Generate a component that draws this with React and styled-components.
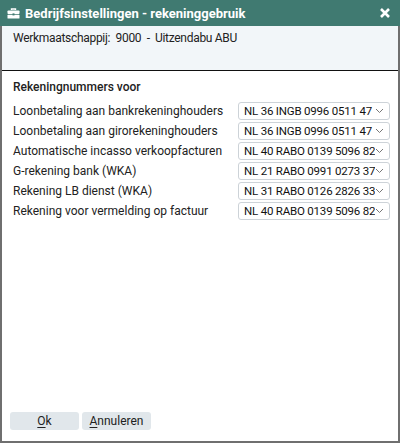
import React from "react";
import styled, { createGlobalStyle } from "styled-components";

const Global = createGlobalStyle`
  html, body { margin: 0; padding: 0; background: #fff; }
  body { font-family: Roboto, "Noto Sans", Arial, sans-serif; }
`;

const Window = styled.div`
  box-sizing: border-box;
  width: 400px;
  height: 443px;
  display: flex;
  flex-direction: column;
  border: 2px solid #6f6f6f;
  border-top: none;
  background: #fff;
`;

const TitleBar = styled.div`
  height: 26px;
  margin: 0 -2px;
  background: #407a71;
  color: #fff;
  display: flex;
  align-items: center;
  padding: 0 8px 0 7px;
  font-size: 13px;
  font-weight: 700;
  gap: 5px;
`;

const TitleText = styled.span`
  flex: 1;
`;

const Close = styled.span`
  display: flex;
  align-items: center;
  padding-right: 2px;
`;

const Header = styled.div`
  height: 45px;
  background: #f2f6f9;
  border-bottom: 1px solid #111;
  padding: 5px 0 0 11px;
  box-sizing: border-box;
  font-size: 12px;
  letter-spacing: -0.3px;
  color: #222;
  white-space: pre;
`;

const Body = styled.div`
  flex: 1;
  padding: 9px 8px 0 11px;
  color: #222;
  font-size: 12px;
`;

const SectionTitle = styled.div`
  font-weight: 500;
  height: 14px;
  line-height: 14px;
  margin-bottom: 8px;
`;

const Rows = styled.div`
  display: flex;
  flex-direction: column;
  gap: 2px;
`;

const Row = styled.div`
  display: flex;
  align-items: center;
  height: 18px;
`;

const Label = styled.span`
  flex: 1;
`;

const Select = styled.div`
  box-sizing: border-box;
  width: 152px;
  height: 18px;
  border: 1px solid #cdd3d8;
  border-radius: 3px;
  display: flex;
  align-items: center;
  padding: 0 5px 0 5px;
  font-size: 11.5px;
  letter-spacing: -0.2px;
  color: #111;
  background: #fff;
`;

const Value = styled.span`
  flex: 1;
  white-space: nowrap;
  overflow: hidden;
`;

const Footer = styled.div`
  display: flex;
  gap: 3px;
  padding: 0 0 11px 8px;
`;

const Button = styled.button`
  width: 69px;
  height: 18px;
  border: none;
  border-radius: 3px;
  background: #e1e7eb;
  font-family: inherit;
  font-size: 12px;
  color: #222;
  padding: 0;
  cursor: pointer;
  u { text-decoration: underline; text-underline-offset: 2px; }
`;

const Chevron = () => (
  <svg width="9" height="6" viewBox="0 0 9 6">
    <polyline points="1,1 4.5,4.5 8,1" fill="none" stroke="#777" strokeWidth="1" />
  </svg>
);

const Briefcase = () => (
  <svg width="13" height="11" viewBox="0 0 13 11">
    <path d="M4.5 2V1h4v1" fill="none" stroke="#fff" strokeWidth="1.4" />
    <rect x="0.5" y="2.5" width="12" height="3.5" rx="0.8" fill="#fff" />
    <rect x="0.5" y="6.8" width="12" height="3.7" rx="0.6" fill="#fff" />
    <rect x="5.5" y="5.4" width="2" height="2" fill="#407a71" />
  </svg>
);

const CloseIcon = () => (
  <svg width="10" height="10" viewBox="0 0 10 10">
    <path d="M1 1L9 9M9 1L1 9" stroke="#fff" strokeWidth="2.6" strokeLinecap="butt" />
  </svg>
);

const rows = [
  ["Loonbetaling aan bankrekeninghouders", "NL 36 INGB 0996 0511 47"],
  ["Loonbetaling aan girorekeninghouders", "NL 36 INGB 0996 0511 47"],
  ["Automatische incasso verkoopfacturen", "NL 40 RABO 0139 5096 82"],
  ["G-rekening bank (WKA)", "NL 21 RABO 0991 0273 37"],
  ["Rekening LB dienst (WKA)", "NL 31 RABO 0126 2826 33"],
  ["Rekening voor vermelding op factuur", "NL 40 RABO 0139 5096 82"],
];

export default function App() {
  return (
    <>
      <Global />
      <Window>
        <TitleBar>
          <Briefcase />
          <TitleText>Bedrijfsinstellingen - rekeninggebruik</TitleText>
          <Close><CloseIcon /></Close>
        </TitleBar>
        <Header>Werkmaatschappij:  9000  -  Uitzendabu ABU</Header>
        <Body>
          <SectionTitle>Rekeningnummers voor</SectionTitle>
          <Rows>
            {rows.map(([l, v], i) => (
              <Row key={i}>
                <Label>{l}</Label>
                <Select>
                  <Value>{v}</Value>
                  <Chevron />
                </Select>
              </Row>
            ))}
          </Rows>
        </Body>
        <Footer>
          <Button><u>O</u>k</Button>
          <Button><u>A</u>nnuleren</Button>
        </Footer>
      </Window>
    </>
  );
}
